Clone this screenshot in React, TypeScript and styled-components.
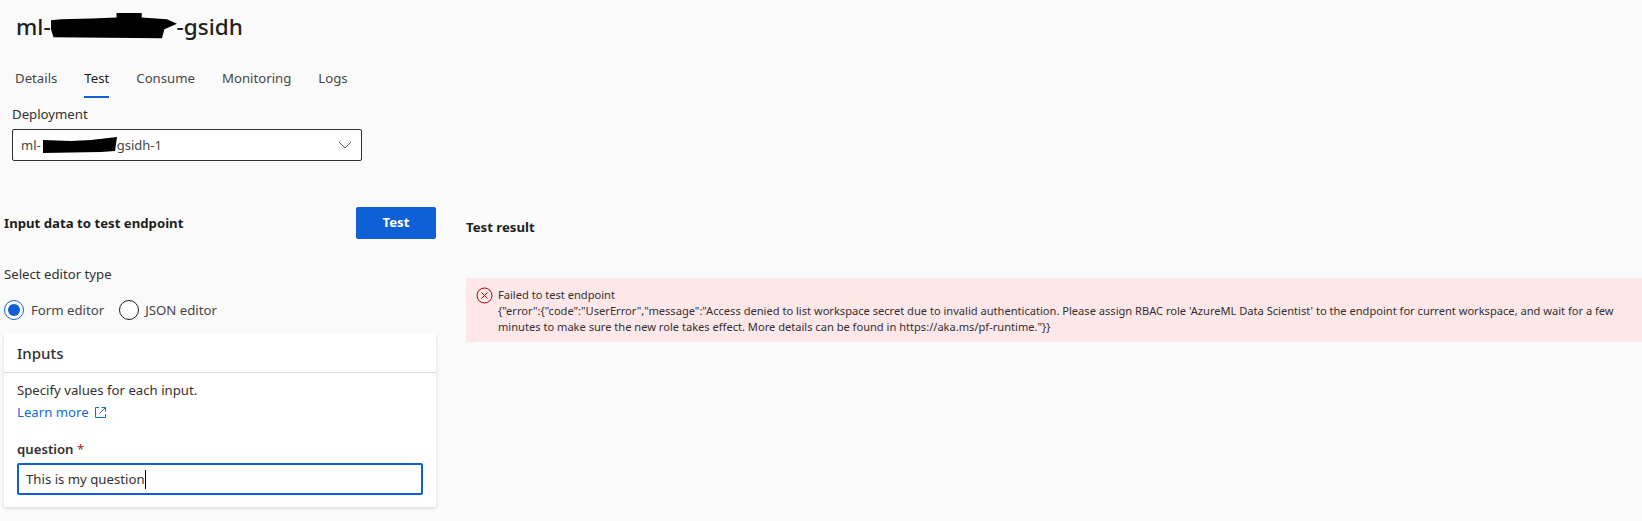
import { useState } from "react";
import styled, { createGlobalStyle } from "styled-components";

const GlobalStyle = createGlobalStyle`
  html, body {
    margin: 0;
    padding: 0;
    background-color: #fafafa;
    font-family: "Noto Sans", "Open Sans", "Liberation Sans", sans-serif;
    color: #323130;
  }
`;

const Page = styled.div`
  width: 1642px;
  height: 521px;
  overflow: hidden;
  box-sizing: border-box;
`;

const Title = styled.h1`
  display: flex;
  align-items: center;
  height: 32px;
  margin: 0;
  padding: 10px 0 0 16px;
  font-size: 22.5px;
  font-weight: 500;
  color: #201f1e;
`;

const Tabs = styled.nav`
  display: flex;
  margin: 23px 0 0 15px;
  gap: 27px;
`;

const Tab = styled.div<{ $active?: boolean }>`
  height: 33px;
  box-sizing: border-box;
  padding-top: 3px;
  font-size: 13.2px;
  line-height: 20px;
  color: ${(props) => (props.$active ? "#201f1e" : "#484644")};
  border-bottom: 2px solid ${(props) => (props.$active ? "#0f5fd7" : "transparent")};
`;

const DeploymentBlock = styled.div`
  margin: 6px 0 0 12px;
  width: 350px;
`;

const FieldLabel = styled.div`
  font-size: 13.2px;
  line-height: 20px;
  color: #323130;
`;

const Select = styled.div`
  display: flex;
  align-items: center;
  justify-content: space-between;
  box-sizing: border-box;
  height: 32px;
  margin-top: 5px;
  padding: 0 9px 0 8px;
  background-color: #fff;
  border: 1px solid #323130;
  border-radius: 2px;
  font-size: 13px;
  color: #484644;
`;

const SelectValue = styled.span`
  display: flex;
  align-items: center;
`;

const Columns = styled.div`
  display: grid;
  grid-template-columns: 432px 1fr;
  column-gap: 30px;
  margin: 46px 0 0 4px;
`;

const LeftColumn = styled.section`
  display: flex;
  flex-direction: column;
`;

const RightColumn = styled.section`
  display: flex;
  flex-direction: column;
`;

const HeadingRow = styled.div`
  display: flex;
  align-items: center;
  justify-content: space-between;
  height: 32px;
`;

const SectionHeading = styled.h2`
  margin: 0;
  font-size: 13.2px;
  font-weight: 700;
  color: #201f1e;
`;

const TestButton = styled.button`
  width: 80px;
  height: 32px;
  padding: 0 0 2px;
  border: none;
  border-radius: 2px;
  background-color: #0f5fd7;
  color: #fff;
  font-family: inherit;
  font-size: 13.2px;
  font-weight: 700;
`;

const ResultHeadingRow = styled(HeadingRow)`
  padding-top: 4px;
`;

const EditorLabel = styled(FieldLabel)`
  margin-top: 25px;
`;

const RadioRow = styled.div`
  display: flex;
  align-items: center;
  height: 20px;
  margin-top: 16px;
`;

const RadioOption = styled.label<{ $gap: number }>`
  display: flex;
  align-items: center;
  gap: ${(props) => props.$gap}px;
  margin-right: 15px;
  font-size: 13.2px;
  color: #484644;
`;

const RadioCircle = styled.span<{ $checked?: boolean }>`
  display: flex;
  align-items: center;
  justify-content: center;
  box-sizing: border-box;
  width: 20px;
  height: 20px;
  border-radius: 50%;
  background-color: #fff;
  border: 1px solid ${(props) => (props.$checked ? "#0f5fd7" : "#201f1e")};
  &::after {
    content: "";
    display: ${(props) => (props.$checked ? "block" : "none")};
    width: 12px;
    height: 12px;
    border-radius: 50%;
    background-color: #0f5fd7;
  }
`;

const Card = styled.div`
  margin-top: 13px;
  height: 174px;
  background-color: #fff;
  box-shadow: 0 1.6px 3.6px rgba(0, 0, 0, 0.13), 0 0.3px 0.9px rgba(0, 0, 0, 0.11);
`;

const CardHeader = styled.div`
  display: flex;
  align-items: center;
  box-sizing: border-box;
  height: 40px;
  padding-left: 13px;
  font-size: 15px;
  font-weight: 500;
  color: #323130;
  border-bottom: 1px solid #dcdcdc;
`;

const CardBody = styled.div`
  display: flex;
  flex-direction: column;
  padding: 6px 13px 0;
`;

const HelpText = styled.div`
  font-size: 13.2px;
  line-height: 22px;
  color: #323130;
`;

const LearnMore = styled.a`
  display: flex;
  align-items: center;
  gap: 6px;
  font-size: 13.2px;
  line-height: 22px;
  color: #0f6cd7;
`;

const QuestionLabel = styled.div`
  margin-top: 16px;
  font-size: 13.2px;
  line-height: 20px;
  font-weight: 600;
  color: #323130;
`;

const Required = styled.span`
  color: #a4262c;
  font-weight: 400;
`;

const QuestionInput = styled.div`
  display: flex;
  align-items: center;
  box-sizing: border-box;
  height: 32px;
  margin-top: 4px;
  padding-left: 7px;
  border: 2px solid #0f5fd7;
  border-radius: 2px;
  font-size: 13.2px;
  color: #323130;
`;

const Caret = styled.span`
  display: inline-block;
  width: 1px;
  height: 19px;
  background-color: #000;
`;

const ErrorBanner = styled.div`
  display: flex;
  box-sizing: border-box;
  height: 64px;
  margin-top: 35px;
  padding: 9px 0 0 10px;
  gap: 5px;
  background-color: #fde7e9;
`;

const ErrorIconWrap = styled.div`
  flex: none;
  width: 17px;
  height: 17px;
  color: #a80000;
`;

const ErrorText = styled.div`
  font-size: 11.1px;
  line-height: 16px;
  color: #323130;
  white-space: pre;
`;

function Scribble({ width, height }: { width: number; height: number }) {
  return (
    <svg width={width} height={height} viewBox="0 0 100 30" preserveAspectRatio="none">
      <path
        d="M0 8 L8 7 L32 6 L52 5 L52 0 L72 0 L72 5 L92 7 L100 12 L90 18 L88 28 L2 27 L0 18 Z"
        fill="#000"
      />
    </svg>
  );
}

function SelectScribble() {
  return (
    <svg width={76} height={16} viewBox="0 0 76 16">
      <path d="M2 3 L30 4 L50 3 L76 0 L74 14 L60 15 L2 16 Z" fill="#000" />
    </svg>
  );
}

function Chevron() {
  return (
    <svg width={14} height={8} viewBox="0 0 14 8" fill="none">
      <path d="M1 1 L7 7 L13 1" stroke="#605e5c" strokeWidth="1" />
    </svg>
  );
}

function ExternalLink() {
  return (
    <svg width={11} height={11} viewBox="0 0 11 11" fill="none" stroke="#0f6cd7" strokeWidth="1">
      <path d="M4 .5 H.5 V10.5 H10.5 V7" />
      <path d="M6.5 .5 H10.5 V4.5 M10.5 .5 L4.5 6.5" />
    </svg>
  );
}

function ErrorIcon() {
  return (
    <svg width={17} height={17} viewBox="0 0 17 17" fill="none" stroke="currentColor" strokeWidth="1">
      <circle cx="8.5" cy="8.5" r="7.5" />
      <path d="M5.5 5.5 L11.5 11.5 M11.5 5.5 L5.5 11.5" />
    </svg>
  );
}

const errorLines = [
  "Failed to test endpoint",
  `{"error":{"code":"UserError","message":"Access denied to list workspace secret due to invalid authentication. Please assign RBAC role 'AzureML Data Scientist' to the endpoint for current workspace, and wait for a few`,
  `minutes to make sure the new role takes effect. More details can be found in https://aka.ms/pf-runtime."}}`,
];

const tabs = ["Details", "Test", "Consume", "Monitoring", "Logs"];

function App() {
  const [activeTab] = useState("Test");

  return (
    <Page>
      <GlobalStyle />
      <Title>
        ml-
        <Scribble width={126} height={27} />
        -gsidh
      </Title>
      <Tabs>
        {tabs.map((tab) => (
          <Tab key={tab} $active={tab === activeTab}>
            {tab}
          </Tab>
        ))}
      </Tabs>
      <DeploymentBlock>
        <FieldLabel>Deployment</FieldLabel>
        <Select>
          <SelectValue>
            ml-
            <SelectScribble />
            gsidh-1
          </SelectValue>
          <Chevron />
        </Select>
      </DeploymentBlock>
      <Columns>
        <LeftColumn>
          <HeadingRow>
            <SectionHeading>Input data to test endpoint</SectionHeading>
            <TestButton>Test</TestButton>
          </HeadingRow>
          <EditorLabel>Select editor type</EditorLabel>
          <RadioRow>
            <RadioOption $gap={7}>
              <RadioCircle $checked />
              Form editor
            </RadioOption>
            <RadioOption $gap={6}>
              <RadioCircle />
              JSON editor
            </RadioOption>
          </RadioRow>
          <Card>
            <CardHeader>Inputs</CardHeader>
            <CardBody>
              <HelpText>Specify values for each input.</HelpText>
              <LearnMore>
                Learn more
                <ExternalLink />
              </LearnMore>
              <QuestionLabel>
                question <Required>*</Required>
              </QuestionLabel>
              <QuestionInput>
                This is my question
                <Caret />
              </QuestionInput>
            </CardBody>
          </Card>
        </LeftColumn>
        <RightColumn>
          <ResultHeadingRow>
            <SectionHeading>Test result</SectionHeading>
          </ResultHeadingRow>
          <ErrorBanner>
            <ErrorIconWrap>
              <ErrorIcon />
            </ErrorIconWrap>
            <ErrorText>{errorLines.join("\n")}</ErrorText>
          </ErrorBanner>
        </RightColumn>
      </Columns>
    </Page>
  );
}

export default App;
